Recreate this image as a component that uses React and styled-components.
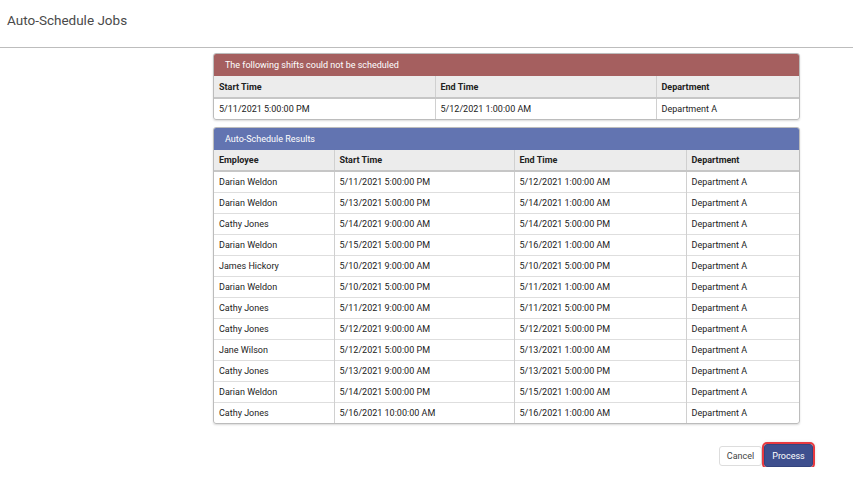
import React from "react";
import styled, { createGlobalStyle } from "styled-components";

const GlobalStyle = createGlobalStyle`
  html, body {
    margin: 0;
    padding: 0;
    background: #fff;
    font-family: Roboto, "Liberation Sans", sans-serif;
  }
`;

const TitleBar = styled.div`
  height: 48px;
  border-bottom: 1px solid #bdbdbd;
  display: flex;
  align-items: center;
  padding-left: 7px;
  padding-bottom: 7px;
  box-sizing: border-box;
  font-size: 13.5px;
  color: #4a4a4a;
`;

const Content = styled.div`
  padding: 5px 0 0 213px;
  width: 587px;
  display: flex;
  flex-direction: column;
  gap: 7px;
`;

const Panel = styled.div`
  border: 1px solid #bcbcbc;
  border-radius: 3px;
  overflow: hidden;
  box-shadow: 0 1px 2px rgba(0, 0, 0, 0.15);
`;

const PanelHeader = styled.div`
  background: ${({ $tone }) => ($tone === "error" ? "#a55f5f" : "#6274b1")};
  color: #fff;
  height: 22px;
  display: flex;
  align-items: center;
  padding-left: 11px;
  font-size: 9px;
`;

const Table = styled.table`
  width: 100%;
  border-collapse: collapse;
  table-layout: fixed;
  font-size: 9px;
  color: #222;
`;

const Th = styled.th`
  background: #ececec;
  text-align: left;
  font-weight: 700;
  height: ${({ $tall }) => ($tall ? "21px" : "20px")};
  padding: 0 5px;
  border-bottom: 2px solid #c6c6c6;
  border-left: 1px solid #d0d0d0;
  &:first-child {
    border-left: none;
  }
`;

const Td = styled.td`
  height: 20px;
  padding: 0 5px;
  border-top: 1px solid #dedede;
  border-left: 1px solid #d0d0d0;
  white-space: nowrap;
  &:first-child {
    border-left: none;
  }
`;

const Actions = styled.div`
  display: flex;
  justify-content: flex-end;
  align-items: center;
  gap: 2px;
  padding: 20px 40px 0 0;
`;

const Button = styled.button`
  font-family: Roboto, "Liberation Sans", sans-serif;
  font-size: 9px;
  height: ${({ $primary }) => ($primary ? "23px" : "20px")};
  border-radius: 3px;
  cursor: pointer;
  padding: 0;
  width: ${({ $primary }) => ($primary ? "49px" : "43px")};
  background: ${({ $primary }) => ($primary ? "#3e4f8e" : "#fff")};
  color: ${({ $primary }) => ($primary ? "#fff" : "#444")};
  border: 1px solid ${({ $primary }) => ($primary ? "#34447e" : "#ddd")};
  ${({ $highlight }) =>
    $highlight &&
    `outline: 2px solid #e8393f; outline-offset: 0px; box-shadow: 0 0 4px rgba(0,0,0,0.35);`}
`;

const failed = [["5/11/2021 5:00:00 PM", "5/12/2021 1:00:00 AM", "Department A"]];

const results = [
  ["Darian Weldon", "5/11/2021 5:00:00 PM", "5/12/2021 1:00:00 AM"],
  ["Darian Weldon", "5/13/2021 5:00:00 PM", "5/14/2021 1:00:00 AM"],
  ["Cathy Jones", "5/14/2021 9:00:00 AM", "5/14/2021 5:00:00 PM"],
  ["Darian Weldon", "5/15/2021 5:00:00 PM", "5/16/2021 1:00:00 AM"],
  ["James Hickory", "5/10/2021 9:00:00 AM", "5/10/2021 5:00:00 PM"],
  ["Darian Weldon", "5/10/2021 5:00:00 PM", "5/11/2021 1:00:00 AM"],
  ["Cathy Jones", "5/11/2021 9:00:00 AM", "5/11/2021 5:00:00 PM"],
  ["Cathy Jones", "5/12/2021 9:00:00 AM", "5/12/2021 5:00:00 PM"],
  ["Jane Wilson", "5/12/2021 5:00:00 PM", "5/13/2021 1:00:00 AM"],
  ["Cathy Jones", "5/13/2021 9:00:00 AM", "5/13/2021 5:00:00 PM"],
  ["Darian Weldon", "5/14/2021 5:00:00 PM", "5/15/2021 1:00:00 AM"],
  ["Cathy Jones", "5/16/2021 10:00:00 AM", "5/16/2021 1:00:00 AM"],
];

const App = () => {
  return (
    <>
      <GlobalStyle />
      <TitleBar>Auto-Schedule Jobs</TitleBar>
      <Content>
        <Panel>
          <PanelHeader $tone="error">The following shifts could not be scheduled</PanelHeader>
          <Table>
            <colgroup>
              <col style={{ width: 221 }} />
              <col style={{ width: 221 }} />
              <col />
            </colgroup>
            <thead>
              <tr>
                <Th $tall>Start Time</Th>
                <Th $tall>End Time</Th>
                <Th $tall>Department</Th>
              </tr>
            </thead>
            <tbody>
              {failed.map((row, i) => (
                <tr key={i}>
                  {row.map((c, j) => (
                    <Td key={j}>{c}</Td>
                  ))}
                </tr>
              ))}
            </tbody>
          </Table>
        </Panel>
        <Panel>
          <PanelHeader>Auto-Schedule Results</PanelHeader>
          <Table>
            <colgroup>
              <col style={{ width: 120 }} />
              <col style={{ width: 180 }} />
              <col style={{ width: 172 }} />
              <col />
            </colgroup>
            <thead>
              <tr>
                <Th>Employee</Th>
                <Th>Start Time</Th>
                <Th>End Time</Th>
                <Th>Department</Th>
              </tr>
            </thead>
            <tbody>
              {results.map((row, i) => (
                <tr key={i}>
                  {row.map((c, j) => (
                    <Td key={j}>{c}</Td>
                  ))}
                  <Td>Department A</Td>
                </tr>
              ))}
            </tbody>
          </Table>
        </Panel>
      </Content>
      <Actions>
        <Button>Cancel</Button>
        <Button $primary $highlight>
          Process
        </Button>
      </Actions>
    </>
  );
};

export default App;
